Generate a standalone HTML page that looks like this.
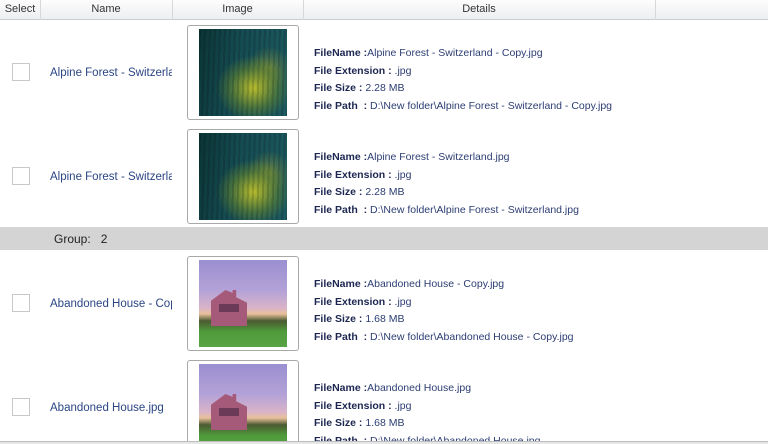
<!DOCTYPE html>
<html><head><meta charset="utf-8"><style>
*{margin:0;padding:0;box-sizing:border-box}
html,body{width:768px;height:444px;overflow:hidden}
body{background:#fff;font-family:"Liberation Sans",sans-serif;position:relative}
.hdr{position:absolute;left:0;top:0;width:768px;height:20px;background:linear-gradient(#fdfdfd,#eceef0);border-bottom:1px solid #c9ccd0;font-size:11px;color:#333}
.hdr div{position:absolute;top:3px;text-align:center}
.hdr .sep{position:absolute;top:0;width:1px;height:20px;background:#d6d8db}
.cb{position:absolute;left:12px;width:18px;height:18px;border:1px solid #c8c8c8;background:#fff}
.nm{position:absolute;left:50px;width:122px;overflow:hidden;white-space:nowrap;font-size:11.5px;color:#2b4585}
.box{position:absolute;left:187px;width:112px;height:95px;border:1px solid #a8a8a8;border-radius:3px;background:#fff;overflow:hidden}
.img{position:absolute;left:11px;top:3px;width:88px;height:87px;overflow:hidden}
.forest{background:repeating-linear-gradient(92deg,rgba(0,0,0,.15) 0 2px,transparent 2px 5px),radial-gradient(ellipse 42% 38% at 62% 68%,rgba(200,200,40,.9),rgba(120,150,40,.5) 60%,transparent),radial-gradient(ellipse 25% 25% at 80% 45%,rgba(170,170,50,.5),transparent),linear-gradient(100deg,#0b3434,#154b52 40%,#1d5a60)}
.house{background:linear-gradient(#9a8fd0 0%,#b3a2d8 35%,#d9b3c9 55%,#e9c09a 62%,#4b5a32 70%,#4f9a3a 82%,#58a446 100%)}
.house:before{content:"";position:absolute;left:12px;top:30px;width:36px;height:36px;background:#a45a78;clip-path:polygon(0 30%,40% 0,60% 8%,60% 0,70% 0,70% 20%,100% 35%,100% 100%,0 100%)}
.house:after{content:"";position:absolute;left:20px;top:44px;width:20px;height:8px;background:#6a3a58}
.dt{position:absolute;left:314px;font-size:10.5px;color:#2c3d72;line-height:17.7px;white-space:nowrap}
.dt b{color:#1c2650}
.grp{position:absolute;left:0;top:227px;width:768px;height:23px;background:#d4d4d4;font-size:12px;color:#222}
</style></head><body>
<div class="hdr">
<div style="left:0;width:40px">Select</div>
<div style="left:40px;width:132px">Name</div>
<div style="left:172px;width:131px">Image</div>
<div style="left:303px;width:352px">Details</div>
<span class="sep" style="left:40px"></span><span class="sep" style="left:172px"></span><span class="sep" style="left:303px"></span><span class="sep" style="left:655px"></span>
</div>

<div class="cb" style="top:63px"></div>
<div class="nm" style="top:67px">Alpine Forest - Switzerland - Copy.jpg</div>
<div class="box" style="top:25px"><div class="img forest"></div></div>
<div class="dt" style="top:45px"><b>FileName :</b>Alpine Forest - Switzerland - Copy.jpg<br><b>File Extension :</b> .jpg<br><b>File Size :</b> 2.28 MB<br><b>File Path &nbsp;:</b> D:\New folder\Alpine Forest - Switzerland - Copy.jpg</div>

<div class="cb" style="top:167px"></div>
<div class="nm" style="top:171px">Alpine Forest - Switzerland.jpg</div>
<div class="box" style="top:129px"><div class="img forest"></div></div>
<div class="dt" style="top:149px"><b>FileName :</b>Alpine Forest - Switzerland.jpg<br><b>File Extension :</b> .jpg<br><b>File Size :</b> 2.28 MB<br><b>File Path &nbsp;:</b> D:\New folder\Alpine Forest - Switzerland.jpg</div>

<div class="grp"><span style="position:absolute;left:54px;top:5px">Group: &nbsp; 2</span></div>

<div class="cb" style="top:294px"></div>
<div class="nm" style="top:298px">Abandoned House - Copy.jpg</div>
<div class="box" style="top:256px"><div class="img house"></div></div>
<div class="dt" style="top:276px"><b>FileName :</b>Abandoned House - Copy.jpg<br><b>File Extension :</b> .jpg<br><b>File Size :</b> 1.68 MB<br><b>File Path &nbsp;:</b> D:\New folder\Abandoned House - Copy.jpg</div>

<div class="cb" style="top:398px"></div>
<div class="nm" style="top:402px">Abandoned House.jpg</div>
<div class="box" style="top:360px;height:84px"><div class="img house"></div></div>
<div class="dt" style="top:380px"><b>FileName :</b>Abandoned House.jpg<br><b>File Extension :</b> .jpg<br><b>File Size :</b> 1.68 MB<br><b>File Path &nbsp;:</b> D:\New folder\Abandoned House.jpg</div>

<div style="position:absolute;left:0;top:441px;width:768px;height:3px;background:#e6e6e6;border-top:1px solid #bdbdbd"></div>
</body></html>
